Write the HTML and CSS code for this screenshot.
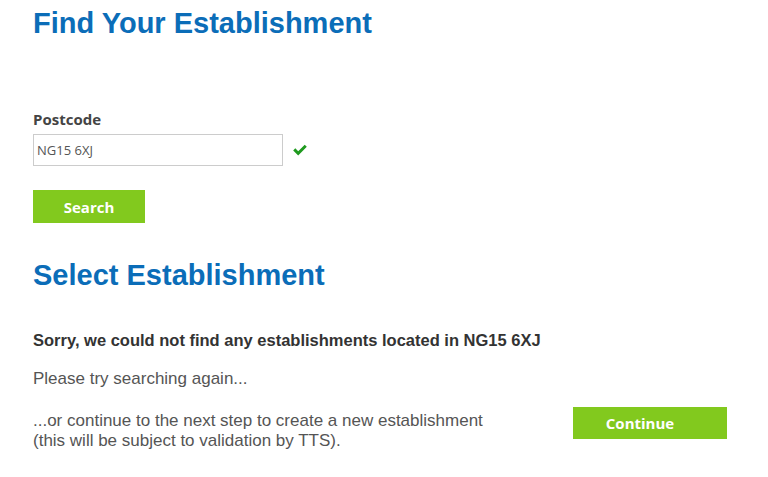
FILE: index.html
```html
<!DOCTYPE html>
<html lang="en">
<head>
<meta charset="utf-8">
<title>Find Your Establishment</title>
<link rel="stylesheet" href="styles.css">
</head>
<body>
<main class="page">
  <h1 class="title">Find Your Establishment</h1>
  <div class="field">
    <label class="label" for="pc">Postcode</label>
    <div class="input-row">
      <input class="input" id="pc" type="text" value="NG15 6XJ">
      <svg class="check" width="16" height="12" viewBox="0 0 16 12" aria-hidden="true">
        <path d="M1.2 6.4 L3.3 4.3 L6.2 7.2 L12.7 0.7 L14.8 2.8 L6.2 11.4 Z" fill="#1f9a1f"/>
      </svg>
    </div>
  </div>
  <button class="btn btn-search" type="button">Search</button>
  <h2 class="title title-2">Select Establishment</h2>
  <p class="sorry">Sorry, we could not find any establishments located in NG15 6XJ</p>
  <p class="muted">Please try searching again...</p>
  <div class="continue-row">
    <p class="muted continue-text">...or continue to the next step to create a new establishment<br>(this will be subject to validation by TTS).</p>
    <button class="btn btn-continue" type="button">Continue</button>
  </div>
</main>
</body>
</html>
```

FILE: styles.css
```css
html, body {
  margin: 0;
  padding: 0;
  background: #ffffff;
}

.page {
  padding: 6px 33px 0;
  font-family: "Liberation Sans", Arial, sans-serif;
}

.title {
  margin: 0;
  font-family: "Liberation Sans", Arial, sans-serif;
  font-weight: bold;
  font-size: 29px;
  line-height: 34px;
  color: #0b6db8;
}

.title-2 {
  margin-top: 35px;
}

.field {
  margin-top: 69px;
}

.label {
  display: block;
  font-family: "Open Sans", sans-serif;
  font-weight: 700;
  font-size: 15px;
  line-height: 20px;
  color: #444444;
}

.input-row {
  display: flex;
  align-items: center;
  gap: 9px;
  margin-top: 5px;
}

.input {
  box-sizing: border-box;
  width: 250px;
  height: 32px;
  margin: 0;
  padding: 0 3px;
  border: 1px solid #cccccc;
  border-radius: 0;
  font-family: "Open Sans", sans-serif;
  font-size: 13px;
  color: #555555;
  background: #ffffff;
  outline: none;
}

.check {
  display: block;
}

.btn {
  display: block;
  box-sizing: border-box;
  border: 0;
  margin: 0;
  padding: 0;
  background: #82c91e;
  color: #ffffff;
  font-family: "Open Sans", sans-serif;
  font-weight: 700;
  font-size: 15px;
  cursor: pointer;
}

.btn-search {
  margin-top: 24px;
  width: 112px;
  height: 33px;
}

.sorry {
  margin: 38px 0 0;
  font-weight: bold;
  font-size: 16.5px;
  line-height: 20px;
  color: #333333;
}

.muted {
  margin: 0;
  font-size: 17px;
  line-height: 20px;
  color: #555555;
}

.sorry + .muted {
  margin-top: 19px;
}

.continue-row {
  display: grid;
  grid-template-columns: 540px 154px;
  align-items: start;
  margin-top: 18px;
}

.continue-text {
  padding-top: 4px;
}

.btn-continue {
  width: 154px;
  height: 32px;
  padding-right: 20px;
}
```
